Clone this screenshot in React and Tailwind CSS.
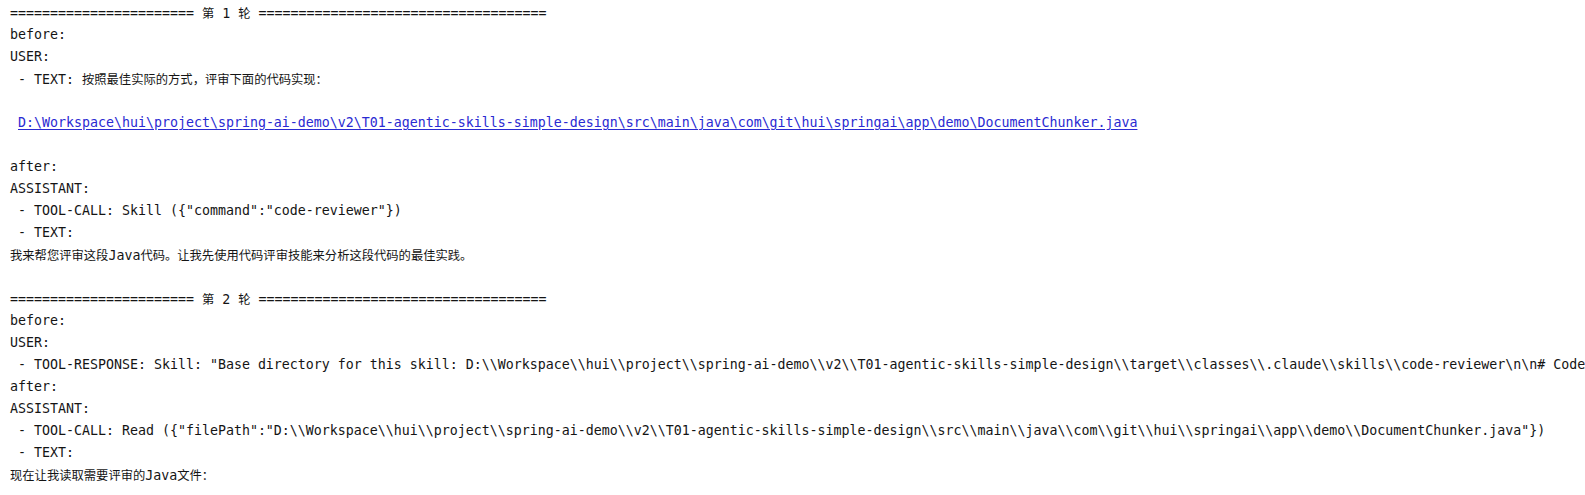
import React from "react";

const CJK_RE = /([\u3000-\u303f\u4e00-\u9fff\uff00-\uffef]+)/;

// mono text with CJK runs rendered in a CJK font, like the IDE console fallback
function Mixed({ text }) {
  return text.split(CJK_RE).map((part, i) =>
    CJK_RE.test(part) ? (
      <span key={i} className="font-['Noto_Sans_CJK_SC','Noto_Sans_CJK_JP',sans-serif] text-[12.3px]">{part}</span>
    ) : (
      <span key={i}>{part}</span>
    )
  );
}

const SEP_L = "=".repeat(23);
const SEP_R = "=".repeat(36);

const LINES = [
  { t: `${SEP_L} 第 1 轮 ${SEP_R}` },
  { t: "before:" },
  { t: "USER:" },
  { t: " - TEXT: 按照最佳实际的方式，评审下面的代码实现：" },
  { t: "" },
  { t: "D:\\Workspace\\hui\\project\\spring-ai-demo\\v2\\T01-agentic-skills-simple-design\\src\\main\\java\\com\\git\\hui\\springai\\app\\demo\\DocumentChunker.java", link: true },
  { t: "" },
  { t: "after:" },
  { t: "ASSISTANT:" },
  { t: ' - TOOL-CALL: Skill ({"command":"code-reviewer"})' },
  { t: " - TEXT:" },
  { t: "我来帮您评审这段Java代码。让我先使用代码评审技能来分析这段代码的最佳实践。" },
  { t: "" },
  { t: `${SEP_L} 第 2 轮 ${SEP_R}` },
  { t: "before:" },
  { t: "USER:" },
  { t: ' - TOOL-RESPONSE: Skill: "Base directory for this skill: D:\\\\Workspace\\\\hui\\\\project\\\\spring-ai-demo\\\\v2\\\\T01-agentic-skills-simple-design\\\\target\\\\classes\\\\.claude\\\\skills\\\\code-reviewer\\n\\n# Code Reviewer\\n\\nThis skill helps review code for best practices"' },
  { t: "after:" },
  { t: "ASSISTANT:" },
  { t: ' - TOOL-CALL: Read ({"filePath":"D:\\\\Workspace\\\\hui\\\\project\\\\spring-ai-demo\\\\v2\\\\T01-agentic-skills-simple-design\\\\src\\\\main\\\\java\\\\com\\\\git\\\\hui\\\\springai\\\\app\\\\demo\\\\DocumentChunker.java"})' },
  { t: " - TEXT:" },
  { t: "现在让我读取需要评审的Java文件：" },
];

export default function App() {
  return (
    <div className="w-[1585px] h-[495px] overflow-hidden bg-white pt-[2px] pl-[10px] text-[#141414] font-['DejaVu_Sans_Mono','Liberation_Mono',monospace] text-[13.29px]">
      {LINES.map((line, i) => (
        <div key={i} className="h-[22px] leading-[22px] whitespace-pre">
          {line.link ? (
            <>
              <span> </span>
              <span className="text-[#2a2ad2] underline underline-offset-2">{line.t}</span>
            </>
          ) : (
            <Mixed text={line.t} />
          )}
        </div>
      ))}
    </div>
  );
}
